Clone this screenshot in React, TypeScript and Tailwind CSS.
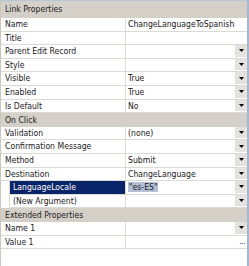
import React from "react";

type Row =
  | { kind: "header"; label: string }
  | { kind: "prop"; label: string; value?: string; dd?: boolean; dots?: boolean; indent?: boolean; selected?: boolean; hlValue?: boolean };

const rows: Row[] = [
  { kind: "prop", label: "Name", value: "ChangeLanguageToSpanish" },
  { kind: "prop", label: "Title" },
  { kind: "prop", label: "Parent Edit Record", dd: true },
  { kind: "prop", label: "Style", dd: true },
  { kind: "prop", label: "Visible", value: "True", dd: true },
  { kind: "prop", label: "Enabled", value: "True", dd: true },
  { kind: "prop", label: "Is Default", value: "No", dd: true },
  { kind: "header", label: "On Click" },
  { kind: "prop", label: "Validation", value: "(none)", dd: true },
  { kind: "prop", label: "Confirmation Message", dd: true },
  { kind: "prop", label: "Method", value: "Submit", dd: true },
  { kind: "prop", label: "Destination", value: "ChangeLanguage", dd: true },
  { kind: "prop", label: "LanguageLocale", value: "\"es-ES\"", dd: true, indent: true, selected: true, hlValue: true },
  { kind: "prop", label: "(New Argument)", dd: true, indent: true },
  { kind: "header", label: "Extended Properties" },
  { kind: "prop", label: "Name 1", dd: true },
  { kind: "prop", label: "Value 1", dots: true },
];

function DropBtn() {
  return (
    <div className="absolute right-0 top-0 bottom-[1px] w-[12px] bg-[#e4e2dd] flex items-center justify-center">
      <svg width="5" height="3" viewBox="0 0 5 3">
        <path d="M0 0H5L2.5 3Z" fill="#000" />
      </svg>
    </div>
  );
}

export default function App() {
  return (
    <div
      className="w-[249px] h-[266px] bg-white overflow-hidden border-t border-t-[#b9c6d8] border-l border-l-[#c9c7c2] border-r-2 border-r-[#a3b7d3] text-[8.6px] text-[#1a1a1a] leading-none"
      style={{ fontFamily: '"DejaVu Sans Condensed", Tahoma, "DejaVu Sans", sans-serif', fontStretch: "condensed" }}
    >
      <div className="h-[17px] bg-[#d4d0c8] border-b border-b-[#d4d0c8] flex items-center pl-[4px]">Link Properties</div>
      {rows.map((r, i) =>
        r.kind === "header" ? (
          <div key={i} className="h-[13.6px] bg-[#d4d0c8] flex items-center pl-[4px]">
            {r.label}
          </div>
        ) : (
          <div key={i} className="h-[13.6px] flex">
            <div className={`${r.indent ? "w-[8px]" : "w-0"} shrink-0 bg-white`} />
            <div
              className={`flex-1 min-w-0 flex items-center border-b border-r border-[#dcdad5] whitespace-nowrap overflow-hidden ${r.indent ? "border-l pl-[3px]" : "pl-[4px]"} ${
                r.selected ? "bg-[#0a246a] text-white" : ""
              }`}
            >
              {r.label}
            </div>
            <div className="w-[121px] shrink-0 relative flex items-center border-b border-[#dcdad5] pl-[2px] whitespace-nowrap">
              {r.value && (
                <span className={r.hlValue ? "bg-[#b4bfd6] px-[1px] leading-[10px]" : ""}>{r.value}</span>
              )}
              {r.dd && <DropBtn />}
              {r.dots && (
                <span className="absolute right-[2px] top-[1px] text-[#20305a] tracking-[-0.5px]">...</span>
              )}
            </div>
          </div>
        )
      )}
    </div>
  );
}
